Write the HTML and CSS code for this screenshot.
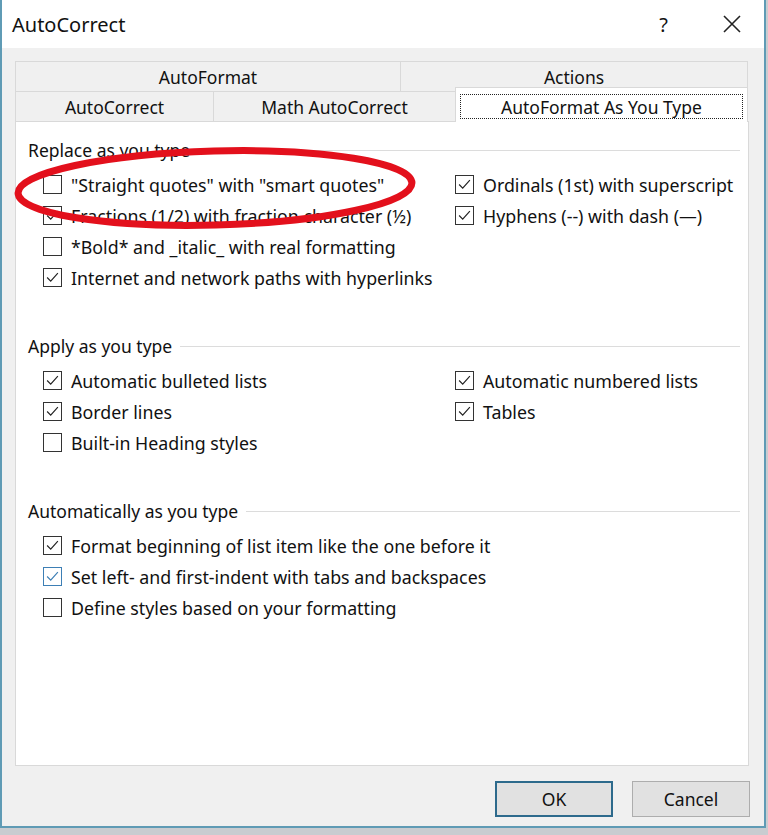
FILE: index.html
```html
<!DOCTYPE html>
<html lang="en">
<head>
    <meta charset="UTF-8">
    <title>AutoCorrect</title>
    <link rel="stylesheet" href="styles.css">
</head>
<body>
    <div class="dialog">
        <div class="title-bar">
            <span class="title">AutoCorrect</span>
            <span class="help">?</span>
            <svg class="close" width="20" height="20" viewBox="0 0 20 20"><path d="M2 2 L18 18 M18 2 L2 18" stroke="#222" stroke-width="1.6" fill="none"/></svg>
        </div>

        <div class="dialog-body">
            <div class="tabs">
                <div class="tab-row">
                    <div class="tab tab-autoformat">AutoFormat</div>
                    <div class="tab tab-actions">Actions</div>
                </div>
                <div class="tab-row">
                    <div class="tab tab-autocorrect">AutoCorrect</div>
                    <div class="tab tab-math">Math AutoCorrect</div>
                    <div class="tab tab-active"><span class="focus">AutoFormat As You Type</span></div>
                </div>
            </div>

            <div class="panel">
                <div class="group">
                    <div class="group-title"><span>Replace as you type</span></div>
                    <div class="options">
                        <label class="option"><span class="box"></span>"Straight quotes" with "smart quotes"</label>
                        <label class="option"><span class="box"><svg viewBox="0 0 19 19"><path d="M3.5 9.5 L7.5 13.5 L15.5 4.5"/></svg></span>Ordinals (1st) with superscript</label>
                        <label class="option"><span class="box"><svg viewBox="0 0 19 19"><path d="M3.5 9.5 L7.5 13.5 L15.5 4.5"/></svg></span>Fractions (1/2) with fraction character (½)</label>
                        <label class="option"><span class="box"><svg viewBox="0 0 19 19"><path d="M3.5 9.5 L7.5 13.5 L15.5 4.5"/></svg></span>Hyphens (--) with dash (—)</label>
                        <label class="option wide"><span class="box"></span>*Bold* and _italic_ with real formatting</label>
                        <label class="option wide"><span class="box"><svg viewBox="0 0 19 19"><path d="M3.5 9.5 L7.5 13.5 L15.5 4.5"/></svg></span>Internet and network paths with hyperlinks</label>
                    </div>
                </div>

                <div class="group">
                    <div class="group-title"><span>Apply as you type</span></div>
                    <div class="options">
                        <label class="option"><span class="box"><svg viewBox="0 0 19 19"><path d="M3.5 9.5 L7.5 13.5 L15.5 4.5"/></svg></span>Automatic bulleted lists</label>
                        <label class="option"><span class="box"><svg viewBox="0 0 19 19"><path d="M3.5 9.5 L7.5 13.5 L15.5 4.5"/></svg></span>Automatic numbered lists</label>
                        <label class="option"><span class="box"><svg viewBox="0 0 19 19"><path d="M3.5 9.5 L7.5 13.5 L15.5 4.5"/></svg></span>Border lines</label>
                        <label class="option"><span class="box"><svg viewBox="0 0 19 19"><path d="M3.5 9.5 L7.5 13.5 L15.5 4.5"/></svg></span>Tables</label>
                        <label class="option wide"><span class="box"></span>Built-in Heading styles</label>
                    </div>
                </div>

                <div class="group">
                    <div class="group-title"><span>Automatically as you type</span></div>
                    <div class="options">
                        <label class="option wide"><span class="box"><svg viewBox="0 0 19 19"><path d="M3.5 9.5 L7.5 13.5 L15.5 4.5"/></svg></span>Format beginning of list item like the one before it</label>
                        <label class="option wide"><span class="box hover"><svg viewBox="0 0 19 19"><path d="M3.5 9.5 L7.5 13.5 L15.5 4.5"/></svg></span>Set left- and first-indent with tabs and backspaces</label>
                        <label class="option wide"><span class="box"></span>Define styles based on your formatting</label>
                    </div>
                </div>
            </div>

            <div class="buttons">
                <button class="btn btn-default">OK</button>
                <button class="btn">Cancel</button>
            </div>
        </div>
    </div>

    <!-- red marker circled over the first option -->
    <svg class="marker" width="768" height="835" viewBox="0 0 768 835">
        <ellipse cx="215" cy="188" rx="197" ry="37" transform="rotate(-1.5 215 188)" fill="none" stroke="#e3101c" stroke-width="7"/>
    </svg>
</body>
</html>
```

FILE: styles.css
```css
/* Page */
body {
    margin: 0;
    padding: 0;
    background: #c9ccd0;
    font-family: 'Noto Sans', 'Open Sans', sans-serif;
    color: #111;
    position: relative;
    width: 768px;
    height: 835px;
    overflow: hidden;
}

.marker {
    position: absolute;
    top: 0;
    left: 0;
    pointer-events: none;
}

/* Window */
.dialog {
    width: 762px;
    height: 826px;
    border: 2px solid #5f9bb5;
    border-top: none;
    background: #f0f0f0;
    display: flex;
    flex-direction: column;
}

.title-bar {
    height: 48px;
    background: #fff;
    display: flex;
    align-items: center;
    padding: 0 22px 0 10px;
}

.title {
    font-size: 20px;
    flex: 1;
}

.help {
    font-size: 20px;
    margin-right: 54px;
}

.dialog-body {
    flex: 1;
    padding: 13px 14px 0 13px;
    display: flex;
    flex-direction: column;
}

/* Tabs */
.tab-row {
    display: flex;
    height: 30px;
}

.tab {
    border: 1px solid #d9d9d9;
    border-bottom: none;
    margin-right: -1px;
    font-size: 17.5px;
    display: flex;
    align-items: center;
    justify-content: center;
    box-sizing: border-box;
}

.tab-autoformat { width: 386px; }
.tab-actions { width: 348px; }
.tab-autocorrect { width: 199px; }
.tab-math { width: 243px; }

.tab-active {
    width: 293px;
    background: #fff;
    margin-top: -4px;
    height: 35px;
    margin-bottom: -1px;
    position: relative;
    z-index: 1;
}

.focus {
    border: 1px dotted #222;
    width: 281px;
    height: 23px;
    display: flex;
    align-items: center;
    justify-content: center;
    margin-top: 3px;
}

/* Panel */
.panel {
    height: 645px;
    box-sizing: border-box;
    width: 734px;
    background: #fff;
    border: 1px solid #d9d9d9;
    padding: 16px 8px 0 12px;
}

.group {
    margin-bottom: 41px;
}

.group-title {
    display: flex;
    align-items: center;
    font-size: 17.5px;
    height: 24px;
}

.group-title::after {
    content: '';
    flex: 1;
    border-top: 1px solid #dcdcdc;
    margin-left: 8px;
}

.options {
    display: grid;
    grid-template-columns: 412px 1fr;
    padding-left: 15px;
    margin-top: 7px;
}

.option {
    height: 31px;
    display: flex;
    align-items: center;
    font-size: 17.8px;
    white-space: nowrap;
}

.option.wide {
    grid-column: 1 / 3;
}

.box {
    width: 17px;
    height: 17px;
    border: 1px solid #333;
    margin-right: 9px;
    background: #fff;
    flex-shrink: 0;
}

.box svg {
    display: block;
    width: 17px;
    height: 17px;
    fill: none;
    stroke: #222;
    stroke-width: 1.3;
}

.box.hover {
    border-color: #3d7fb5;
}

.box.hover svg {
    stroke: #3d7fb5;
}

/* Buttons */
.buttons {
    display: flex;
    justify-content: flex-end;
    gap: 19px;
    margin-top: 15px;
    margin-right: 0;
}

.btn {
    width: 118px;
    height: 36px;
    background: #e1e1e1;
    border: 1px solid #adadad;
    font-family: inherit;
    font-size: 17.5px;
    color: #111;
}

.btn-default {
    border: 2px solid #2d6a8c;
}
```
